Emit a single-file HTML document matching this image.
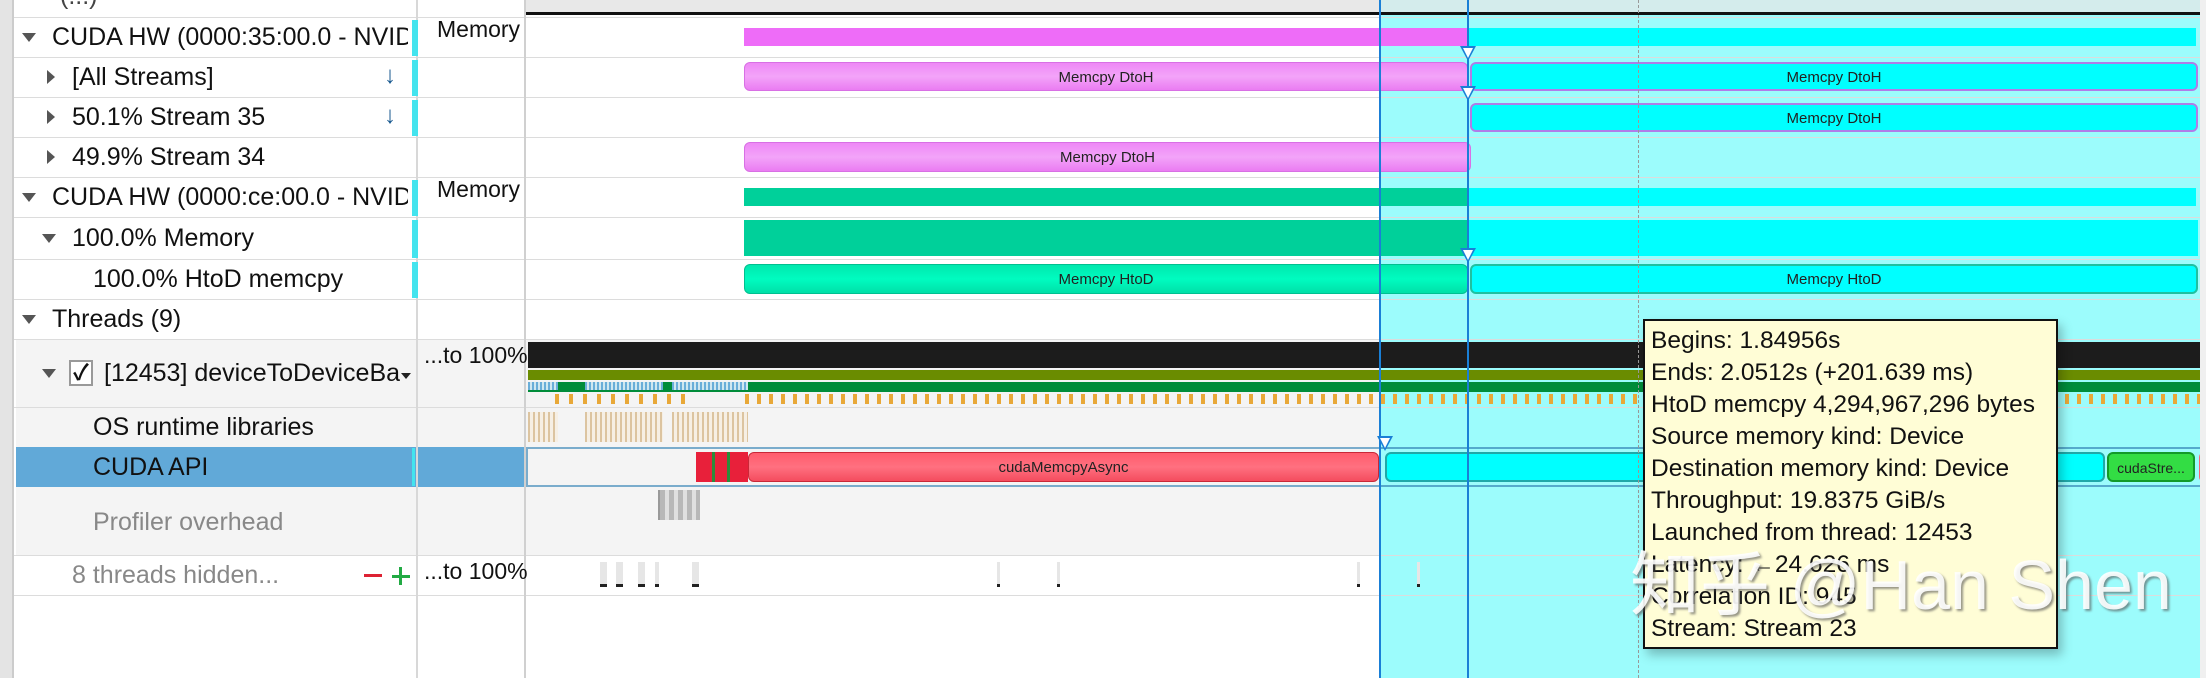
<!DOCTYPE html>
<html><head><meta charset="utf-8"><style>
*{margin:0;padding:0;box-sizing:border-box}
body{width:2206px;height:678px;overflow:hidden;background:#fff;position:relative;font-family:"Liberation Sans","Noto Sans CJK SC",sans-serif;color:#111}
.a{position:absolute}
.t{position:absolute;font-size:25px;white-space:nowrap;line-height:40px}
.hl{position:absolute;left:14px;width:2192px;height:1px;background:#dcdcdc}
.tri{position:absolute;width:0;height:0;border-left:7px solid transparent;border-right:7px solid transparent;border-top:9px solid #555}
.tr{position:absolute;width:0;height:0;border-top:7px solid transparent;border-bottom:7px solid transparent;border-left:8px solid #555}
.cy{position:absolute;left:412px;width:6px;background:#44e4ee}
.bar{position:absolute;border-radius:6px;font-size:15px;text-align:center;color:#222}
.mk{position:absolute;width:0;height:0;border-left:8px solid transparent;border-right:8px solid transparent;border-top:15px solid #1a7fd6}
.mk:after{content:"";position:absolute;left:-5px;top:-13px;border-left:5px solid transparent;border-right:5px solid transparent;border-top:10px solid #fff}
.tick{position:absolute;top:562px;width:7px;height:25px;background:#e6e6e6;border-bottom:3px solid #222}
</style></head><body>
<div class="a" style="left:0;top:0;width:14px;height:678px;background:#e4e4e4;border-right:2px solid #ccc"></div>
<div class="a" style="left:16px;top:339px;width:2190px;height:216px;background:#f4f4f4"></div>
<div class="a" style="left:526px;top:0;width:1680px;height:12px;background:#e8e8e8"></div>
<div class="a" style="left:526px;top:12px;width:1674px;height:3px;background:#111"></div>
<div class="a" style="left:1380px;top:0;width:820px;height:678px;background:#9cfcfc"></div>
<div class="a" style="left:1380px;top:0;width:820px;height:12px;background:#d4ecec"></div>
<div class="a" style="left:1380px;top:12px;width:820px;height:3px;background:#111"></div>
<div class="a" style="left:16px;top:447px;width:508px;height:40px;background:#61a9d8"></div>
<div class="a" style="left:526px;top:447px;width:854px;height:40px;background:#f4f4f4;border:2px solid #7aaccc;border-right:none"></div>
<div class="a" style="left:1380px;top:447px;width:820px;height:40px;border-top:2px solid #5ac;border-bottom:2px solid #5ac"></div>
<div class="hl" style="top:17px"></div><div class="hl" style="top:57px"></div><div class="hl" style="top:97px"></div><div class="hl" style="top:137px"></div><div class="hl" style="top:177px"></div><div class="hl" style="top:217px"></div><div class="hl" style="top:259px"></div><div class="hl" style="top:299px"></div><div class="hl" style="top:339px"></div><div class="hl" style="top:407px"></div><div class="hl" style="top:555px"></div><div class="hl" style="top:595px"></div>
<div class="a" style="left:416px;top:0;width:2px;height:678px;background:#d8d8d8"></div>
<div class="a" style="left:524px;top:0;width:2px;height:678px;background:#d0d0d0"></div>
<div class="cy" style="top:20px;height:36px"></div><div class="cy" style="top:60px;height:36px"></div><div class="cy" style="top:100px;height:36px"></div><div class="cy" style="top:180px;height:36px"></div><div class="cy" style="top:220px;height:38px"></div><div class="cy" style="top:262px;height:36px"></div><div class="cy" style="top:448px;height:38px;width:3px"></div>
<div class="t" style="left:60px;top:-24px;color:#444">(...)</div>
<div class="tri" style="left:22px;top:33px"></div><div class="t" style="left:52px;top:17px;width:356px;overflow:hidden">CUDA HW (0000:35:00.0 - NVIDIA</div>
<div class="tr" style="left:47px;top:70px"></div><div class="t" style="left:72px;top:57px">[All Streams]</div>
<div class="t" style="left:384px;top:56px;color:#1a5a90;font-size:24px;font-weight:bold">↓</div>
<div class="tr" style="left:47px;top:110px"></div><div class="t" style="left:72px;top:97px">50.1% Stream 35</div>
<div class="t" style="left:384px;top:96px;color:#1a5a90;font-size:24px;font-weight:bold">↓</div>
<div class="tr" style="left:47px;top:150px"></div><div class="t" style="left:72px;top:137px">49.9% Stream 34</div>
<div class="tri" style="left:22px;top:193px"></div><div class="t" style="left:52px;top:177px;width:356px;overflow:hidden">CUDA HW (0000:ce:00.0 - NVIDIA</div>
<div class="tri" style="left:42px;top:234px"></div><div class="t" style="left:72px;top:218px">100.0% Memory</div>
<div class="t" style="left:93px;top:259px">100.0% HtoD memcpy</div>
<div class="tri" style="left:22px;top:315px"></div><div class="t" style="left:52px;top:299px">Threads (9)</div>
<div class="tri" style="left:42px;top:369px"></div>
<div class="a" style="left:69px;top:360px;width:24px;height:26px;border:2px solid #999;background:#fff;font-size:22px;line-height:22px;text-align:center;font-weight:bold">✓</div>
<div class="t" style="left:104px;top:353px;width:296px;overflow:hidden">[12453] deviceToDeviceBandwidth</div>
<div class="a" style="left:401px;top:373px;border-left:5px solid transparent;border-right:5px solid transparent;border-top:6px solid #222"></div>
<div class="t" style="left:93px;top:407px">OS runtime libraries</div>
<div class="t" style="left:93px;top:447px">CUDA API</div>
<div class="t" style="left:93px;top:502px;color:#888">Profiler overhead</div>
<div class="t" style="left:72px;top:555px;color:#888">8 threads hidden...</div>
<div class="a" style="left:364px;top:574px;width:18px;height:3px;background:#dd2233"></div>
<div class="a" style="left:392px;top:575px;width:18px;height:3px;background:#22aa44"></div><div class="a" style="left:399px;top:567px;width:3px;height:18px;background:#22aa44"></div>
<div class="t" style="left:437px;top:9px;font-size:23px">Memory</div>
<div class="t" style="left:437px;top:169px;font-size:23px">Memory</div>
<div class="t" style="left:424px;top:335px;font-size:23px">...to 100%</div>
<div class="t" style="left:424px;top:551px;font-size:23px">...to 100%</div>
<div class="a" style="left:744px;top:28px;width:724px;height:18px;background:#ee6cf8"></div>
<div class="a" style="left:1468px;top:28px;width:728px;height:18px;background:#00ffff"></div>
<div class="bar" style="left:744px;top:62px;width:724px;height:29px;line-height:29px;background:linear-gradient(#ee88f6,#f3a4f9 50%,#ea7cf2);border:1px solid #d870e4">Memcpy DtoH</div>
<div class="bar" style="left:1470px;top:62px;width:728px;height:29px;line-height:27px;background:#00ffff;border:2px solid #b07ce8">Memcpy DtoH</div>
<div class="bar" style="left:1470px;top:103px;width:728px;height:29px;line-height:27px;background:#00ffff;border:2px solid #b07ce8">Memcpy DtoH</div>
<div class="bar" style="left:744px;top:142px;width:727px;height:30px;line-height:30px;background:linear-gradient(#ee88f6,#f3a4f9 50%,#ea7cf2);border:1px solid #d870e4">Memcpy DtoH</div>
<div class="a" style="left:744px;top:188px;width:724px;height:18px;background:#00d09a"></div>
<div class="a" style="left:1468px;top:188px;width:728px;height:18px;background:#00ffff"></div>
<div class="a" style="left:744px;top:220px;width:724px;height:36px;background:#00d09a"></div>
<div class="a" style="left:1468px;top:220px;width:730px;height:36px;background:#00ffff"></div>
<div class="bar" style="left:744px;top:264px;width:724px;height:30px;line-height:30px;background:linear-gradient(#00e8ae,#00fcc0 50%,#00e0a8);border:1px solid #00c090">Memcpy HtoD</div>
<div class="bar" style="left:1470px;top:264px;width:728px;height:30px;line-height:28px;background:#00ffff;border:2px solid #20c0a0">Memcpy HtoD</div>
<div class="a" style="left:528px;top:342px;width:1672px;height:26px;background:#1c1c1c"></div>
<div class="a" style="left:528px;top:370px;width:1672px;height:10px;background:#6a8c00"></div>
<div class="a" style="left:528px;top:382px;width:1672px;height:10px;background:#008c3a"></div>
<div class="a" style="left:528px;top:382px;width:30px;height:8px;background:repeating-linear-gradient(90deg,#6aaed8 0 2px,#cfe8f0 2px 4px)"></div>
<div class="a" style="left:585px;top:382px;width:78px;height:8px;background:repeating-linear-gradient(90deg,#6aaed8 0 2px,#cfe8f0 2px 4px)"></div>
<div class="a" style="left:672px;top:382px;width:76px;height:8px;background:repeating-linear-gradient(90deg,#6aaed8 0 2px,#cfe8f0 2px 4px)"></div>
<div class="a" style="left:745px;top:394px;width:1455px;height:10px;background:repeating-linear-gradient(90deg,#e8a838 0 4px,transparent 4px 12px)"></div>
<div class="a" style="left:555px;top:394px;width:130px;height:10px;background:repeating-linear-gradient(90deg,#e8a838 0 4px,transparent 4px 14px)"></div>
<div class="a" style="left:528px;top:412px;width:30px;height:30px;background:repeating-linear-gradient(90deg,#dcc4a0 0 2px,#f6efe4 2px 5px)"></div>
<div class="a" style="left:585px;top:412px;width:78px;height:30px;background:repeating-linear-gradient(90deg,#dcc4a0 0 2px,#f6efe4 2px 5px)"></div>
<div class="a" style="left:672px;top:412px;width:76px;height:30px;background:repeating-linear-gradient(90deg,#dcc4a0 0 2px,#f6efe4 2px 5px)"></div>
<div class="a" style="left:696px;top:452px;width:52px;height:30px;background:#e8203a"></div>
<div class="a" style="left:712px;top:452px;width:3px;height:30px;background:#2a8c3a"></div><div class="a" style="left:727px;top:452px;width:3px;height:30px;background:#2a8c3a"></div>
<div class="bar" style="left:748px;top:452px;width:631px;height:30px;line-height:30px;background:linear-gradient(#ff5c6c,#ff7080 50%,#f44c5e);border:1px solid #c82838">cudaMemcpyAsync</div>
<div class="bar" style="left:1385px;top:452px;width:720px;height:30px;background:#00ffff;border:2px solid #20a8a8"></div>
<div class="bar" style="left:2107px;top:452px;width:88px;height:30px;line-height:28px;background:#33dd44;border:2px solid #139a2a;font-size:14px">cudaStre...</div>
<div class="bar" style="left:2199px;top:452px;width:10px;height:30px;background:#ff6070"></div>
<div class="a" style="left:658px;top:490px;width:42px;height:30px;background:repeating-linear-gradient(90deg,#b8b8b8 0 5px,#e0e0e0 5px 9px);border-left:2px solid #999"></div>
<div class="tick" style="left:600px"></div><div class="tick" style="left:616px"></div><div class="tick" style="left:638px"></div><div class="tick" style="left:655px;width:4px"></div><div class="tick" style="left:692px"></div><div class="tick" style="left:997px;width:3px"></div><div class="tick" style="left:1057px;width:3px"></div><div class="tick" style="left:1357px;width:3px"></div><div class="tick" style="left:1417px;width:3px"></div>
<div class="a" style="left:1638px;top:0;width:0;height:678px;border-left:1px dashed #999"></div>
<div class="a" style="left:1379px;top:0;width:2px;height:678px;background:#1a7fd6"></div>
<div class="a" style="left:1467px;top:0;width:2px;height:678px;background:#1a7fd6"></div>
<div class="mk" style="left:1460px;top:46px"></div><div class="mk" style="left:1460px;top:86px"></div><div class="mk" style="left:1460px;top:248px"></div><div class="mk" style="left:1377px;top:436px"></div>
<div class="a" style="left:2200px;top:0;width:6px;height:678px;background:#f0f0f0"></div>
<div class="a" style="left:1643px;top:319px;width:415px;height:330px;background:#fffdd6;border:2px solid #111;box-shadow:4px 6px 10px rgba(0,0,0,.25);padding:4px 0 0 6px;font-size:24.5px;line-height:32px;color:#111;white-space:nowrap;overflow:hidden">
Begins: 1.84956s<br>Ends: 2.0512s (+201.639 ms)<br>HtoD memcpy 4,294,967,296 bytes<br>Source memory kind: Device<br>Destination memory kind: Device<br>Throughput: 19.8375 GiB/s<br>Launched from thread: 12453<br>Latency: ←24.626 ms<br>Correlation ID: 945<br>Stream: Stream 23</div>
<div class="a" style="left:1630px;top:540px;font-size:70px;line-height:90px;color:rgba(255,255,255,.9);text-shadow:2px 2px 2px rgba(80,80,80,.6);white-space:nowrap">知乎 @Han Shen</div>
</body></html>
